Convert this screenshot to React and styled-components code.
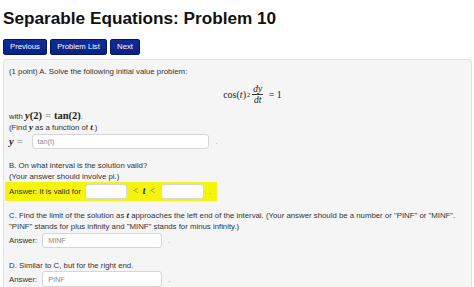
import React from 'react';
import styled, { createGlobalStyle } from 'styled-components';

const Global = createGlobalStyle`
  html, body {
    margin: 0;
    padding: 0;
    background: #fff;
  }
  body {
    font-family: "Liberation Sans", Arial, sans-serif;
    color: #333;
  }
`;

const Page = styled.div`
  width: 474px;
  height: 287px;
  overflow: hidden;
`;

const Title = styled.h1`
  margin: 0;
  padding: 8px 0 0 3px;
  font-size: 17.2px;
  line-height: 20px;
  font-weight: bold;
  color: #111;
`;

const NavBar = styled.div`
  display: flex;
  gap: 3px;
  padding: 11px 0 0 3px;
`;

const NavButton = styled.button`
  box-sizing: border-box;
  width: ${props => props.w}px;
  height: 16px;
  padding: 0;
  border: 1px solid #05185e;
  border-radius: 2px;
  background: linear-gradient(#0f2d9a, #0a2283);
  color: #fff;
  font-family: "Liberation Sans", Arial, sans-serif;
  font-size: 7.7px;
  line-height: 14px;
  cursor: pointer;
`;

const Panel = styled.div`
  margin: 4px 2px 0 3px;
  padding: 5px 5px 0;
  height: 260px;
  background: #f5f5f5;
  border: 1px solid #e3e3e3;
  border-radius: 3px;
  font-size: 7.8px;
  line-height: 11px;
`;

const Line = styled.div`
  margin-top: ${props => props.top || 0}px;
`;

const Display = styled.div`
  display: flex;
  justify-content: center;
  align-items: center;
  padding: 0 0 0 30px;
  height: 22px;
  margin: 6px 0 5px;
  font-family: "Liberation Serif", "DejaVu Serif", serif;
  font-size: 10px;
  color: #222;
`;

const Frac = styled.span`
  display: inline-flex;
  flex-direction: column;
  align-items: center;
  margin: 0 3px 0 2px;
  font-size: 9.5px;
  line-height: 10px;

  & > span:first-child {
    border-bottom: 0.8px solid #333;
    padding: 0 1px;
  }
`;

const Sup = styled.sup`
  font-size: 6.5px;
  vertical-align: 5px;
  margin-left: 1px;
`;

const M = styled.span`
  font-family: "Liberation Serif", "DejaVu Serif", serif;
  font-size: ${props => props.size || 10.5}px;
  font-weight: bold;
  color: #222;
`;

const Eq = styled.span`
  font-weight: normal;
  color: #777;
  margin: 0 3px;
`;

const I = styled.i`
  font-family: "Liberation Serif", "DejaVu Serif", serif;
  font-size: 9px;
  font-weight: bold;
  color: #222;
`;

const Row = styled.div`
  display: flex;
  align-items: center;
  height: ${props => props.h || 15}px;
  margin-top: ${props => props.top || 0}px;
  gap: ${props => props.gap || 5}px;
`;

const Field = styled.div`
  box-sizing: border-box;
  width: ${props => props.w}px;
  height: ${props => props.h || 15}px;
  padding: 0 5px;
  display: flex;
  align-items: center;
  background: #fff;
  border: 1px solid #d6d6d6;
  border-radius: 3px;
  color: #888;
  font-size: 7.2px;
`;

const Dot = styled.span`
  color: #999;
  margin-left: 1px;
`;

const Highlight = styled.div`
  display: flex;
  align-items: center;
  gap: 4px;
  width: 212px;
  height: 19px;
  margin: 0 0 0 -4px;
  padding-left: 4px;
  box-sizing: border-box;
  background: #f4f40f;
`;

const Less = styled.span`
  font-family: "Liberation Serif", "DejaVu Serif", serif;
  font-size: 9.5px;
  color: #666;
  margin: 0 2px;
  word-spacing: 2px;

  & b {
    color: #222;
    font-style: italic;
  }
`;

export default function App() {
  return (
    <Page>
      <Global />
      <Title>Separable Equations: Problem 10</Title>
      <NavBar>
        <NavButton w={44}>Previous</NavButton>
        <NavButton w={57}>Problem List</NavButton>
        <NavButton w={30}>Next</NavButton>
      </NavBar>
      <Panel>
        <Line top={1}>(1 point) A. Solve the following initial value problem:</Line>
        <Display>
          <span>cos(<i>t</i>)</span>
          <Sup>2</Sup>
          <Frac>
            <span><i>dy</i></span>
            <span><i>dt</i></span>
          </Frac>
          <span>&nbsp;= 1</span>
        </Display>
        <Line>
          with <M><i>y</i>(2)<Eq>=</Eq>tan(2)</M>.
        </Line>
        <Line>(Find <I>y</I> as a function of <I>t</I>.)</Line>
        <Row top={1} gap={6}>
          <M><i>y</i><Eq>=</Eq></M>
          <Field w={177}>tan(t)</Field>
          <Dot>.</Dot>
        </Row>
        <Line top={11}>B. On what interval is the solution valid?</Line>
        <Line>(Your answer should involve pi.)</Line>
        <Highlight>
          <span>Answer: It is valid for</span>
          <Field w={42} />
          <Less>&lt; <b>t</b> &lt;</Less>
          <Field w={43} />
          <Dot>.</Dot>
        </Highlight>
        <Line top={9}>C. Find the limit of the solution as <I>t</I> approaches the left end of the interval. (Your answer should be a number or "PINF" or "MINF".</Line>
        <Line>"PINF" stands for plus infinity and "MINF" stands for minus infinity.)</Line>
        <Row top={1} gap={5}>
          <span>Answer:</span>
          <Field w={120}>MINF</Field>
          <Dot>.</Dot>
        </Row>
        <Line top={12}>D. Similar to C, but for the right end.</Line>
        <Row h={16} gap={5}>
          <span>Answer:</span>
          <Field w={120} h={16}>PINF</Field>
          <Dot>.</Dot>
        </Row>
      </Panel>
    </Page>
  );
}
